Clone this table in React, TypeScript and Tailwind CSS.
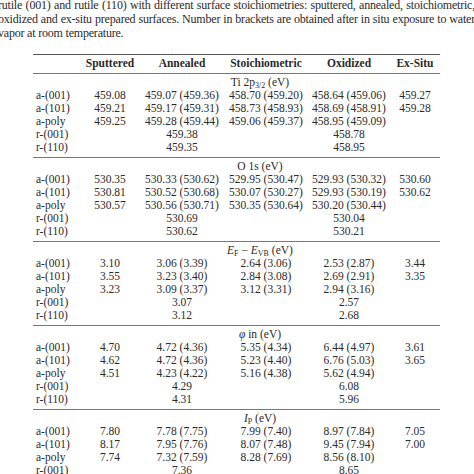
import type { ReactNode } from "react"

type Row = [string, string, string, string, string, string]

type Section = {
  label: ReactNode
  rows: Row[]
}

const sections: Section[] = [
  {
    label: (
      <>
        Ti 2p<sub className="text-[8px]">3/2</sub> (eV)
      </>
    ),
    rows: [
      ["a-(001)", "459.08", "459.07 (459.36)", "458.70 (459.20)", "458.64 (459.06)", "459.27"],
      ["a-(101)", "459.21", "459.17 (459.31)", "458.73 (458.93)", "458.69 (458.91)", "459.28"],
      ["a-poly", "459.25", "459.28 (459.44)", "459.06 (459.37)", "458.95 (459.09)", ""],
      ["r-(001)", "", "459.38", "", "458.78", ""],
      ["r-(110)", "", "459.35", "", "458.95", ""],
    ],
  },
  {
    label: "O 1s (eV)",
    rows: [
      ["a-(001)", "530.35", "530.33 (530.62)", "529.95 (530.47)", "529.93 (530.32)", "530.60"],
      ["a-(101)", "530.81", "530.52 (530.68)", "530.07 (530.27)", "529.93 (530.19)", "530.62"],
      ["a-poly", "530.57", "530.56 (530.71)", "530.35 (530.64)", "530.20 (530.44)", ""],
      ["r-(001)", "", "530.69", "", "530.04", ""],
      ["r-(110)", "", "530.62", "", "530.21", ""],
    ],
  },
  {
    label: (
      <>
        <i>E</i>
        <sub className="text-[8px]">F</sub> − <i>E</i>
        <sub className="text-[8px]">VB</sub> (eV)
      </>
    ),
    rows: [
      ["a-(001)", "3.10", "3.06 (3.39)", "2.64 (3.06)", "2.53 (2.87)", "3.44"],
      ["a-(101)", "3.55", "3.23 (3.40)", "2.84 (3.08)", "2.69 (2.91)", "3.35"],
      ["a-poly", "3.23", "3.09 (3.37)", "3.12 (3.31)", "2.94 (3.16)", ""],
      ["r-(001)", "", "3.07", "", "2.57", ""],
      ["r-(110)", "", "3.12", "", "2.68", ""],
    ],
  },
  {
    label: (
      <>
        <i>φ</i> in (eV)
      </>
    ),
    rows: [
      ["a-(001)", "4.70", "4.72 (4.36)", "5.35 (4.34)", "6.44 (4.97)", "3.61"],
      ["a-(101)", "4.62", "4.72 (4.36)", "5.23 (4.40)", "6.76 (5.03)", "3.65"],
      ["a-poly", "4.51", "4.23 (4.22)", "5.16 (4.38)", "5.62 (4.94)", ""],
      ["r-(001)", "", "4.29", "", "6.08", ""],
      ["r-(110)", "", "4.31", "", "5.96", ""],
    ],
  },
  {
    label: (
      <>
        <i>I</i>
        <sub className="text-[8px]">P</sub> (eV)
      </>
    ),
    rows: [
      ["a-(001)", "7.80", "7.78 (7.75)", "7.99 (7.40)", "8.97 (7.84)", "7.05"],
      ["a-(101)", "8.17", "7.95 (7.76)", "8.07 (7.48)", "9.45 (7.94)", "7.00"],
      ["a-poly", "7.74", "7.32 (7.59)", "8.28 (7.69)", "8.56 (8.10)", ""],
      ["r-(001)", "", "7.36", "", "8.65", ""],
    ],
  },
]

const widths = ["w-[47px]", "w-[60px]", "w-[84px]", "w-[84px]", "w-[82px]", "w-[50px]"]

function DataRow({ row }: { row: Row }) {
  return (
    <div className="flex h-[13px] leading-[13px]">
      {row.map((cell, i) => (
        <div
          key={i}
          className={`${widths[i]} shrink-0 whitespace-nowrap ${i === 0 ? "pl-[3px] text-left" : "text-center"}`}
        >
          {cell}
        </div>
      ))}
    </div>
  )
}

export default function App() {
  return (
    <div className="w-[474px] h-[474px] overflow-hidden bg-white text-[#2a2a2a] font-['Liberation_Serif',serif]">
      {/* caption */}
      <div className="-ml-[2px] -mt-[2px] w-[477px] text-[12px] leading-[14px] tracking-[-0.2px]">
        <div className="whitespace-nowrap text-justify [text-align-last:justify]">
          rutile (001) and rutile (110) with different surface stoichiometries: sputtered, annealed, stoichiometric,
        </div>
        <div className="whitespace-nowrap text-justify [text-align-last:justify]">
          oxidized and ex-situ prepared surfaces. Number in brackets are obtained after in situ exposure to water
        </div>
        <div className="whitespace-nowrap">vapor at room temperature.</div>
      </div>

      {/* table */}
      <div className="ml-[33px] mt-[14px] w-[407px] text-[11.5px]">
        <div className="flex h-[20px] items-center border-t-[1.5px] border-b border-t-[#555] border-b-[#777] font-bold">
          <div className={`${widths[0]} shrink-0`} />
          <div className={`${widths[1]} shrink-0 text-center`}>Sputtered</div>
          <div className={`${widths[2]} shrink-0 text-center`}>Annealed</div>
          <div className={`${widths[3]} shrink-0 text-center`}>Stoichiometric</div>
          <div className={`${widths[4]} shrink-0 text-center`}>Oxidized</div>
          <div className={`${widths[5]} shrink-0 text-center`}>Ex-Situ</div>
        </div>

        {sections.map((s, idx) => (
          <div key={idx} className="border-b border-[#777] pb-[3px]">
            <div className="flex h-[15px] items-center pt-[2px] leading-[13px]">
              <div className="w-[47px] shrink-0" />
              <div className="w-[360px] shrink-0 text-center">{s.label}</div>
            </div>
            {s.rows.map((r, i) => (
              <DataRow key={i} row={r} />
            ))}
          </div>
        ))}
      </div>
    </div>
  )
}
